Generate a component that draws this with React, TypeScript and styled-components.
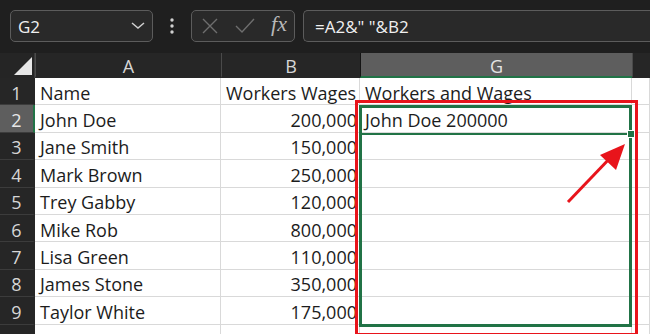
import React from "react";
import styled, { createGlobalStyle } from "styled-components";

// Global ===================================================================

const Global = createGlobalStyle`
    html, body { margin: 0; padding: 0; background: #1f1f1f; }
    body { font-family: "Open Sans", "Liberation Sans", sans-serif; }
`;

// Styled Components ========================================================

const Screen = styled.div`
    width: 650px;
    height: 334px;
    overflow: hidden;
    background: #1f1f1f;
    display: flex;
    flex-direction: column;
`;

const Toolbar = styled.div`
    height: 53px;
    flex-shrink: 0;
    box-sizing: border-box;
    padding: 10px 0 0 10px;
    display: flex;
    align-items: flex-start;
    gap: 8px;
`;

const Field = styled.div<{ $w?: number }>`
    height: 32px;
    box-sizing: border-box;
    border: 1px solid #5c5c5c;
    border-radius: 5px;
    background: #292929;
    display: flex;
    align-items: center;
    color: #f0f0f0;
    font-size: 17px;
    ${(p) => (p.$w ? `width: ${p.$w}px;` : "flex: 1; border-right: none; border-radius: 5px 0 0 5px;")}
`;

const NameText = styled.span`
    flex: 1;
    padding-left: 7px;
`;

const Dots = styled.div`
    width: 22px;
    height: 32px;
    display: flex;
    align-items: center;
    justify-content: center;
`;

const FxIcons = styled.div`
    display: flex;
    align-items: center;
    justify-content: space-between;
    width: 100%;
    padding: 0 7px 0 9px;
`;

const FxLabel = styled.span`
    font-family: "Liberation Serif", serif;
    font-style: italic;
    font-size: 22px;
    color: #b8b8b8;
    margin-top: -4px;
`;

const FormulaText = styled.span`
    padding-left: 11px;
`;

const SheetWrap = styled.div`
    position: relative;
    flex: 1;
`;

const Sheet = styled.div`
    display: grid;
    grid-template-columns: 35px 186px 139px 272px 18px;
    grid-template-rows: 25px repeat(10, 27.4px);
    background: #ffffff;
`;

const Corner = styled.div`
    background: #252525;
    border-right: 1px solid #3a3a3a;
    position: relative;
`;

const ColHead = styled.div<{ $active?: boolean; $gap?: boolean }>`
    background: ${(p) => (p.$active ? "#5e5e5e" : "#262626")};
    color: ${(p) => (p.$active ? "#e4e4e4" : "#d6d6d6")};
    border-left: 1px solid ${(p) => (p.$gap ? "#141414" : "#4a4a4a")};
    border-bottom: 2px solid ${(p) => (p.$active ? "#217346" : "#262626")};
    box-sizing: border-box;
    display: flex;
    align-items: center;
    justify-content: center;
    padding-top: 2px;
    font-size: 18px;
`;

const RowHead = styled.div<{ $active?: boolean }>`
    background: ${(p) => (p.$active ? "#5e5e5e" : "#262626")};
    color: ${(p) => (p.$active ? "#e8e8e8" : "#d6d6d6")};
    border-bottom: 1px solid #3c3c3c;
    border-right: 2px solid ${(p) => (p.$active ? "#217346" : "#262626")};
    box-sizing: border-box;
    display: flex;
    align-items: center;
    justify-content: center;
    padding-top: 3px;
    font-size: 18px;
`;

const Cell = styled.div<{ $right?: boolean }>`
    border-right: 1px solid #d9d9d9;
    border-bottom: 1px solid #d9d9d9;
    box-sizing: border-box;
    display: flex;
    align-items: center;
    justify-content: ${(p) => (p.$right ? "flex-end" : "flex-start")};
    padding: 3px 2px 0 5px;
    font-size: 18px;
    color: #1c1c1c;
    white-space: nowrap;
    overflow: visible;
`;

const Selection = styled.div`
    position: absolute;
    left: 359px;
    top: 52px;
    width: 273px;
    height: 222px;
    box-sizing: border-box;
    border: 3px solid #217346;
    pointer-events: none;
`;

const ActiveLine = styled.div`
    position: absolute;
    left: 0;
    right: 0;
    top: 25px;
    height: 2px;
    background: #217346;
`;

const Handle = styled.div`
    position: absolute;
    right: -6px;
    top: 22px;
    width: 6px;
    height: 6px;
    background: #217346;
    border: 1px solid #ffffff;
`;

const Highlight = styled.div`
    position: absolute;
    left: 355px;
    top: 47px;
    width: 283px;
    height: 236px;
    box-sizing: border-box;
    border: 3px solid #e8141b;
    pointer-events: none;
`;

const Arrow = styled.svg`
    position: absolute;
    left: 560px;
    top: 33px;
    pointer-events: none;
`;

// Data =====================================================================

const rows: [string, string, string][] = [
    ["Name", "Workers Wages", "Workers and Wages"],
    ["John Doe", "200,000", "John Doe 200000"],
    ["Jane Smith", "150,000", ""],
    ["Mark Brown", "250,000", ""],
    ["Trey Gabby", "120,000", ""],
    ["Mike Rob", "800,000", ""],
    ["Lisa Green", "110,000", ""],
    ["James Stone", "350,000", ""],
    ["Taylor White", "175,000", ""],
    ["", "", ""],
];

// ==========================================================================

export default function App() {
    return (
        <Screen>
            <Global />
            <Toolbar>
                <Field $w={143}>
                    <NameText>G2</NameText>
                    <svg width="16" height="10" viewBox="0 0 16 10" style={{ marginRight: 6 }}>
                        <path d="M2 2 L8 7 L14 2" stroke="#cfcfcf" strokeWidth="1.5" fill="none" />
                    </svg>
                </Field>
                <Dots>
                    <svg width="4" height="16" viewBox="0 0 4 16">
                        <circle cx="2" cy="2" r="1.7" fill="#d0d0d0" />
                        <circle cx="2" cy="8" r="1.7" fill="#d0d0d0" />
                        <circle cx="2" cy="14" r="1.7" fill="#d0d0d0" />
                    </svg>
                </Dots>
                <Field $w={104}>
                    <FxIcons>
                        <svg width="18" height="18" viewBox="0 0 18 18">
                            <path d="M2 2 L16 16 M16 2 L2 16" stroke="#6e6e6e" strokeWidth="1.4" />
                        </svg>
                        <svg width="22" height="18" viewBox="0 0 22 18">
                            <path d="M2 9 L8 15 L20 2" stroke="#6e6e6e" strokeWidth="1.4" fill="none" />
                        </svg>
                        <FxLabel>fx</FxLabel>
                    </FxIcons>
                </Field>
                <Field>
                    <FormulaText>=A2&amp;" "&amp;B2</FormulaText>
                </Field>
            </Toolbar>
            <SheetWrap>
                <Sheet>
                    <Corner>
                        <svg width="20" height="20" viewBox="0 0 20 20" style={{ position: "absolute", left: 13, top: 3 }}>
                            <path d="M19 1 L19 19 L1 19 Z" fill="#e6e6e6" />
                        </svg>
                    </Corner>
                    <ColHead>A</ColHead>
                    <ColHead>B</ColHead>
                    <ColHead $active $gap>G</ColHead>
                    <ColHead />
                    {rows.map((r, i) => (
                        <React.Fragment key={i}>
                            <RowHead $active={i === 1}>{i < 9 ? i + 1 : ""}</RowHead>
                            <Cell>{r[0]}</Cell>
                            <Cell $right={i > 0}>{r[1]}</Cell>
                            <Cell>{r[2]}</Cell>
                            <Cell />
                        </React.Fragment>
                    ))}
                </Sheet>
                <Highlight />
                <Selection>
                    <ActiveLine />
                    <Handle />
                </Selection>
                <Arrow width="80" height="130" viewBox="0 0 80 130">
                    <line x1="8" y1="116" x2="52" y2="70" stroke="#e8141b" strokeWidth="3" />
                    <path d="M65 58 L40 69 L56 84 Z" fill="#e8141b" />
                </Arrow>
            </SheetWrap>
        </Screen>
    );
}
